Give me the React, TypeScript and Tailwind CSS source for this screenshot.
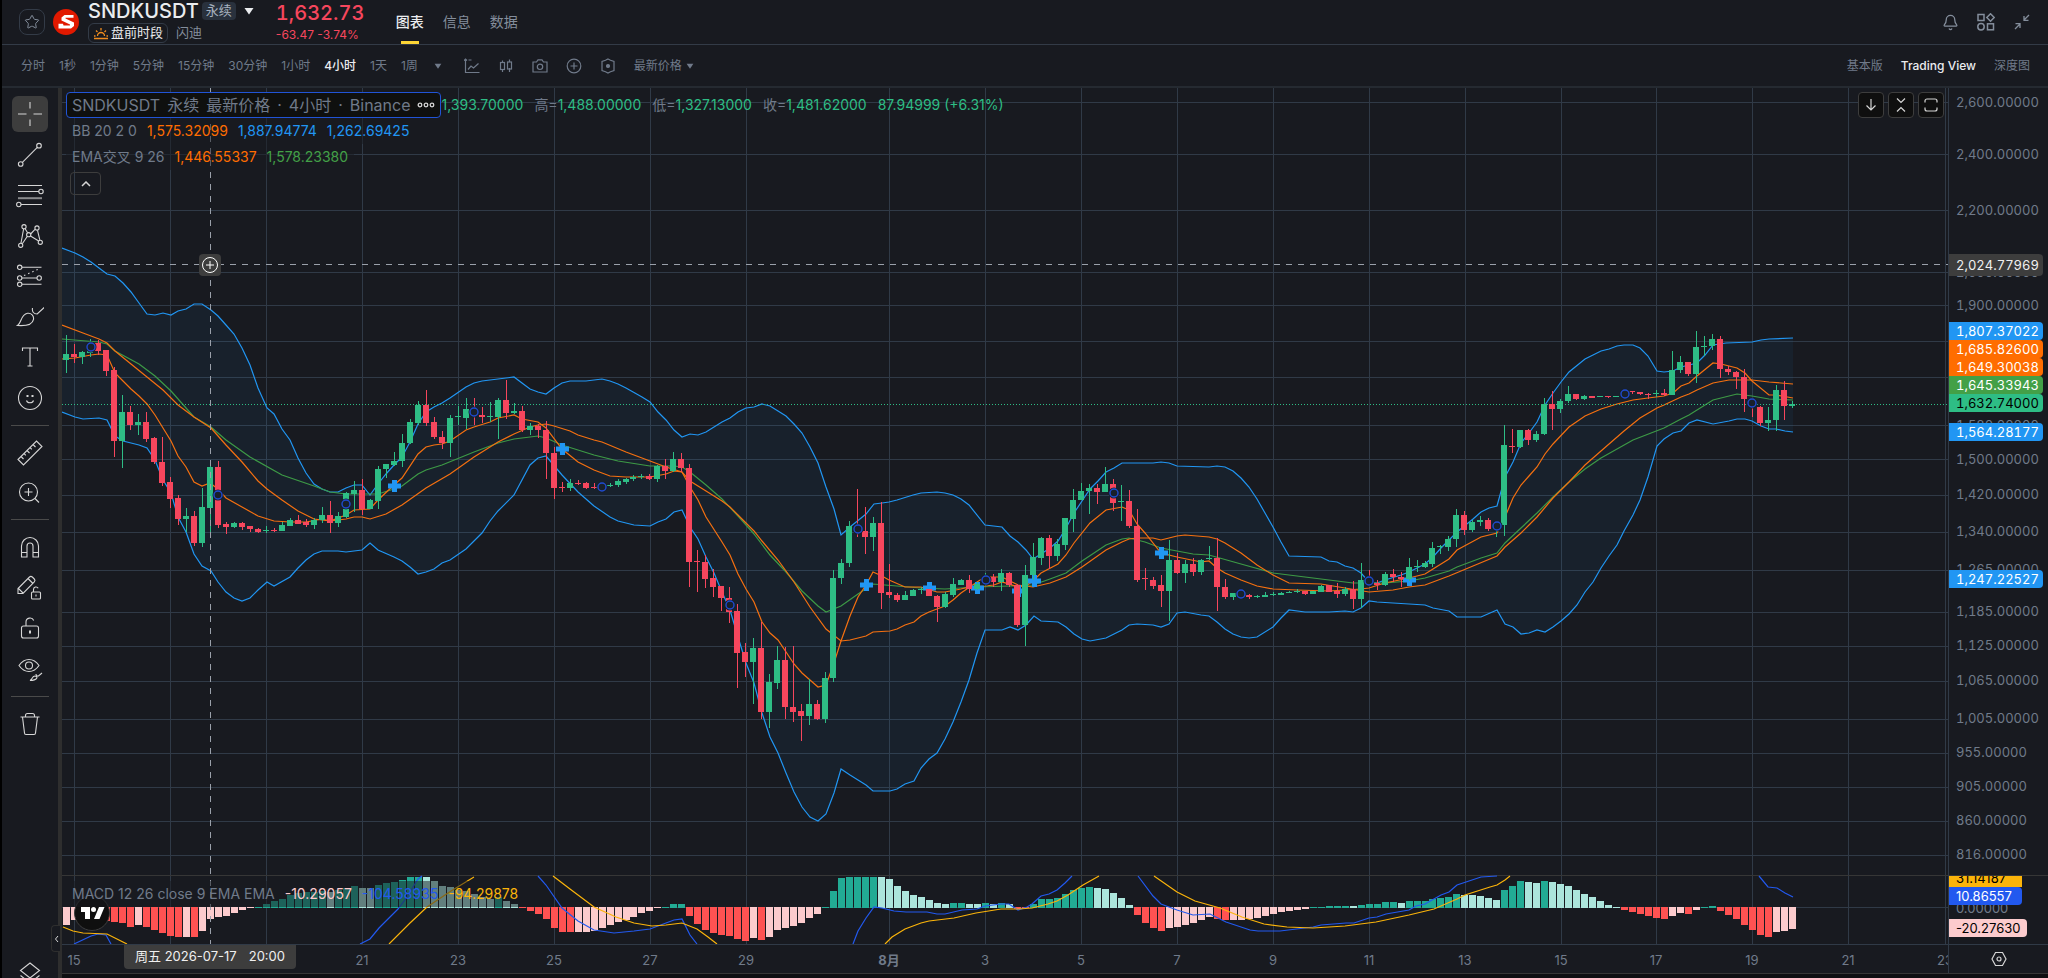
import { ReactNode } from "react";
import { Bell, Star } from "lucide-react";

// plot area in chart units: x 62-1948, price pane 88-876, macd pane 876-944
const LEFT = 62;
const TOP = 88;
const WIDTH = 1886;
const HEIGHT = 856;
const PRICE_H = 788;
const MACD_H = 68;
const ZERO = 907;

const barX = (i: number) => 66.7 + 7.99 * i;

// up/down, high, body top, body bottom, low
const candles = `g 335 354 360 373,r 344 354 357 363,g 351 352 357 364,g 339 345 353 357,r 340 343 351 355,r 350 350 371 376,
r 367 370 441 457,g 395 412 441 468,r 406 412 425 430,g 414 422 425 435,r 412 422 439 442,r 437 438 462 464,
r 437 462 483 486,r 477 482 499 508,r 495 498 519 525,g 508 516 519 532,r 511 516 543 546,g 488 507 543 547,
g 464 467 508 534,r 461 467 525 528,r 522 524 527 534,g 522 523 527 528,r 522 523 527 530,r 526 526 529 532,
r 528 529 532 533,g 526 530 531 533,r 528 530 531 532,g 522 525 531 531,g 518 520 526 526,r 515 520 524 524,
r 519 522 525 527,g 518 520 525 529,g 507 515 520 523,r 501 515 523 533,g 512 516 523 527,g 492 493 517 518,
g 481 490 494 512,r 479 490 509 515,g 499 500 509 509,g 466 469 501 509,g 464 464 469 478,g 452 461 465 466,
g 434 443 461 467,g 419 422 443 444,g 401 405 423 425,r 390 405 423 426,r 417 422 437 439,r 431 437 443 449,
g 415 418 443 457,g 406 416 417 425,g 398 409 418 429,r 398 409 414 425,r 407 415 417 423,g 402 416 417 422,
g 398 400 417 439,r 380 400 413 419,g 403 411 413 414,r 406 411 430 432,g 423 426 430 435,r 424 426 430 438,
r 421 430 453 479,r 447 453 488 499,r 482 487 488 492,g 479 483 488 491,r 480 483 484 485,r 482 483 488 489,
r 483 487 488 489,r 484 486 488 489,g 483 485 486 487,g 479 481 485 487,g 478 479 482 484,g 475 477 479 481,
g 474 476 477 479,r 474 476 479 480,g 465 466 479 482,r 459 466 471 479,g 452 459 471 472,r 453 459 468 472,
r 464 468 562 587,r 550 561 562 592,r 555 562 579 588,r 569 578 587 597,r 586 586 598 611,r 587 598 612 623,
r 604 611 653 688,r 643 652 662 677,g 638 648 662 704,r 622 648 712 719,g 674 682 712 728,g 646 660 683 689,
r 647 660 707 719,r 646 707 712 722,r 704 711 716 741,g 679 704 716 725,r 700 704 719 720,g 672 678 719 723,
g 570 578 678 682,g 559 563 578 584,g 521 526 563 567,r 489 526 531 537,r 507 531 537 554,g 517 523 537 551,
r 502 523 593 609,r 564 592 595 598,r 593 595 600 602,g 591 595 600 600,g 589 590 596 596,g 587 589 590 594,
r 589 589 596 596,r 595 596 607 622,g 592 594 607 608,g 578 584 595 597,g 579 580 585 585,r 575 580 589 593,
g 582 584 589 590,g 573 578 583 586,r 574 577 582 587,g 569 573 582 591,r 572 573 585 587,r 584 585 625 627,
g 565 575 625 646,g 543 557 575 580,g 537 538 558 565,r 535 538 556 569,g 539 544 556 561,g 518 518 545 550,
g 489 500 519 532,g 483 491 500 500,g 484 488 491 514,r 484 488 492 504,g 467 484 492 492,r 479 484 503 511,
g 485 501 502 521,r 490 501 526 528,r 509 526 580 582,r 568 578 579 590,r 577 580 586 589,r 575 585 591 607,
g 540 560 591 621,r 553 560 573 574,g 560 564 573 583,r 558 564 572 576,g 559 560 572 575,g 546 558 559 560,
r 538 558 587 611,r 579 587 597 599,g 593 593 597 600,r 592 593 595 597,r 594 595 597 599,g 595 596 597 598,
g 592 595 597 597,g 592 594 595 596,g 592 593 595 595,g 591 592 593 593,g 589 591 592 593,r 591 591 594 595,
g 591 591 594 594,g 585 586 592 592,r 585 585 592 592,r 583 591 594 598,g 587 589 594 596,r 581 589 599 609,
g 563 580 599 608,r 570 579 583 585,r 580 583 585 590,g 572 574 585 586,r 569 574 577 582,r 572 577 579 587,
g 558 567 579 581,g 560 566 567 572,g 561 563 567 568,g 542 548 564 567,g 545 546 547 554,g 536 539 547 551,
g 509 515 539 547,r 511 515 530 535,g 520 522 530 532,g 516 520 522 526,r 518 520 529 531,g 522 524 529 537,
g 425 445 525 536,r 429 446 447 453,g 430 430 447 448,r 429 430 440 445,g 431 434 440 442,g 398 404 434 435,
r 391 404 409 430,g 399 401 409 413,g 386 394 401 403,r 394 394 399 400,g 395 396 399 400,r 396 396 398 398,
g 396 396 397 397,r 396 396 397 398,g 396 396 397 397,g 391 393 396 397,r 391 391 392 394,r 392 392 394 395,
r 393 394 395 399,g 390 393 394 397,r 389 393 395 396,g 351 370 395 395,g 356 362 370 373,r 362 362 374 376,
g 331 347 374 383,g 336 346 347 356,g 334 339 346 350,r 336 339 369 378,r 366 369 372 375,r 371 372 377 389,
r 369 377 399 412,r 398 400 407 417,r 406 407 423 426,g 407 420 423 431,g 385 390 420 431,r 381 390 406 420,
g 401 404 406 408`
  .split(",")
  .map((row) => {
    const [dir, ...v] = row.trim().split(" ");
    const [high, top, bottom, low] = v.map(Number);
    return { up: dir === "g", high, top, bottom, low };
  });

const upper =
  "62,248 75,253 83,257 91,262 99,268 107,274 115,276 123,283 131,292 139,303 147,314 155,315 163,313 171,315 178,311 186,309 194,304 202,304 211,310 218,316 226,325 234,334 242,348 250,365 258,388 267,408 274,414 282,429 290,440 298,458 306,473 314,484 322,489 330,492 338,492 346,488 354,485 362,485 370,495 378,484 386,474 394,465 402,457 410,442 418,424 426,412 434,407 442,403 450,398 466,387 474,383 482,381 490,380 498,379 514,377 522,383 530,389 538,392 546,394 554,388 562,383 570,381 578,381 586,381 602,379 610,381 618,384 626,388 642,397 650,402 658,412 666,420 674,430 682,437 690,434 698,435 706,432 722,422 730,418 738,412 746,408 754,407 762,404 770,406 778,411 786,416 794,424 802,433 810,447 818,463 826,487 834,509 841,535 850,527 866,514 874,504 882,503 889,502 897,500 913,495 921,493 937,492 945,493 953,495 961,499 969,505 985,525 1002,527 1010,536 1018,542 1026,550 1033,559 1041,554 1050,548 1058,541 1066,528 1074,513 1082,501 1090,489 1098,481 1106,472 1114,468 1122,463 1153,463 1161,462 1169,463 1177,466 1209,467 1217,466 1225,467 1233,471 1241,478 1249,487 1257,499 1265,513 1273,527 1281,542 1289,556 1321,557 1329,561 1337,562 1345,566 1353,568 1361,573 1369,582 1377,583 1385,580 1401,575 1409,572 1425,564 1433,557 1441,548 1449,540 1457,532 1473,519 1481,512 1489,508 1497,506 1505,477 1513,462 1521,443 1529,433 1537,422 1545,405 1553,393 1561,382 1569,372 1585,359 1601,351 1609,349 1617,346 1624,345 1633,345 1640,348 1648,356 1657,371 1664,372 1673,371 1681,367 1697,363 1705,355 1713,345 1726,343 1752,342 1761,340 1769,339 1793,338";

const lower =
  "62,412 75,417 83,419 99,418 107,420 115,436 123,441 131,443 139,445 147,448 155,460 163,480 171,493 178,517 186,532 194,554 202,566 211,571 218,582 226,592 234,598 242,601 250,598 258,590 267,582 274,586 290,577 298,568 306,560 314,554 322,551 338,551 346,552 354,551 362,550 370,543 378,550 394,557 402,561 410,567 418,574 426,572 434,569 442,563 450,560 466,549 482,533 490,521 498,511 514,495 530,465 538,458 546,456 562,475 578,492 594,506 610,517 618,521 626,523 634,525 650,526 658,522 666,519 674,512 682,510 690,527 698,539 706,557 714,573 722,592 730,610 738,637 746,663 754,683 762,713 770,737 778,753 786,773 794,792 802,807 810,817 818,821 826,814 834,793 841,769 850,775 866,785 873,791 890,791 897,789 905,784 914,781 921,768 929,759 937,753 945,739 953,722 961,702 969,680 977,653 985,630 1002,630 1010,627 1018,630 1026,625 1034,616 1041,621 1058,622 1066,627 1074,634 1082,639 1090,641 1106,638 1122,630 1129,625 1137,624 1153,625 1161,627 1169,624 1177,613 1185,612 1201,615 1209,616 1217,622 1225,629 1233,634 1241,637 1249,638 1257,637 1273,627 1281,618 1289,610 1305,612 1329,612 1345,611 1353,612 1361,608 1369,601 1377,602 1393,603 1425,605 1433,608 1449,611 1457,617 1481,617 1497,610 1505,624 1513,627 1521,634 1529,633 1537,630 1545,632 1553,627 1561,621 1569,614 1577,605 1585,592 1593,582 1601,568 1609,556 1617,545 1624,531 1633,515 1640,500 1648,477 1657,446 1664,439 1673,433 1681,431 1689,423 1697,420 1713,424 1729,421 1737,419 1745,419 1752,421 1761,426 1769,429 1776,429 1785,431 1793,432";

const basis =
  "62,325 83,333 99,339 107,343 115,351 131,364 147,377 163,390 178,405 194,417 211,428 226,445 242,462 258,481 267,489 282,500 298,511 314,519 330,521 346,519 354,517 362,517 370,519 386,514 402,505 426,488 450,474 474,457 498,442 514,434 530,427 538,425 546,424 554,426 570,431 578,435 594,440 602,442 626,452 650,461 666,467 682,472 690,481 706,491 722,501 730,507 738,515 754,531 762,541 778,560 794,582 810,607 826,629 841,641 850,640 866,636 873,632 890,631 897,629 905,625 914,622 921,616 929,612 945,606 953,600 961,593 977,582 985,577 1002,577 1010,581 1018,585 1033,587 1050,583 1066,577 1082,567 1106,550 1122,542 1129,539 1137,538 1153,538 1161,540 1169,538 1177,536 1185,535 1209,537 1217,539 1225,543 1241,553 1257,565 1273,575 1289,583 1321,584 1345,588 1369,592 1393,590 1409,587 1425,585 1449,576 1473,566 1497,556 1505,547 1521,533 1529,525 1537,517 1553,498 1569,482 1585,465 1601,451 1624,431 1640,418 1657,408 1664,405 1681,397 1689,394 1697,390 1713,383 1729,380 1737,380 1752,380 1769,382 1793,384";

const fastEma =
  "62,359 75,358 91,355 99,354 107,355 115,373 123,381 131,389 139,396 147,404 155,415 163,428 171,441 178,456 186,467 194,482 202,486 210,483 218,489 226,498 242,507 258,516 274,521 290,522 306,522 322,519 330,521 346,515 354,510 370,509 378,500 394,485 402,478 418,454 426,447 434,445 442,444 450,441 466,430 474,427 490,422 498,418 514,415 522,419 538,422 546,428 562,449 578,462 594,470 610,476 626,477 650,477 666,474 674,471 682,472 690,487 698,500 706,517 722,542 730,555 738,574 746,589 754,602 762,622 770,633 778,640 794,664 802,673 810,680 818,687 826,685 834,663 841,641 850,616 858,597 866,585 873,572 882,576 889,580 905,587 921,587 937,592 945,592 961,589 969,587 985,586 994,585 1002,582 1018,587 1026,586 1033,581 1041,573 1058,564 1066,555 1074,543 1090,523 1106,510 1122,507 1129,510 1137,524 1145,533 1161,553 1177,557 1201,562 1209,561 1217,568 1225,573 1241,580 1257,586 1273,589 1297,590 1329,591 1361,589 1369,588 1385,583 1409,578 1425,574 1433,569 1449,559 1457,550 1481,537 1497,533 1505,517 1513,498 1521,485 1529,476 1537,467 1545,454 1553,444 1569,427 1585,416 1601,409 1617,404 1633,400 1648,398 1664,396 1673,393 1681,386 1689,383 1697,376 1713,363 1721,364 1737,368 1745,373 1752,381 1769,395 1776,395 1793,398";

const slowEma =
  "62,339 99,342 107,344 115,351 139,364 155,376 171,391 194,417 211,427 226,440 250,457 282,475 314,486 330,492 346,494 362,494 378,494 394,489 402,486 418,474 426,470 442,465 474,452 498,443 514,439 538,436 546,438 562,445 594,455 618,461 650,466 674,466 682,467 690,472 706,485 722,499 738,516 754,534 770,555 786,572 802,591 818,606 826,612 841,606 858,594 873,584 897,586 921,588 945,589 977,587 1010,586 1033,585 1050,579 1066,573 1082,561 1106,545 1122,539 1129,538 1145,542 1161,548 1193,554 1209,555 1241,564 1273,573 1305,577 1353,583 1385,583 1409,581 1425,578 1449,571 1457,567 1481,558 1497,553 1505,543 1521,528 1537,513 1553,497 1569,482 1585,469 1601,458 1633,440 1664,428 1681,419 1689,415 1713,400 1737,394 1752,396 1769,399 1793,400";

const macdLines = [
  "74,944 91,936 98,934 106,935 111,944",
  "360,944 370,939 379,928 398,909 407,897 418,879 422,876",
  "538,876 546,885 562,908 578,921 594,930 614,933 634,931 650,929 666,923 674,920 682,919 690,935 697,944",
  "853,944 858,931 866,918 874,907 882,908 894,911 906,912 927,912 937,914 945,914 962,910 977,909 985,906 1001,904 1009,904 1018,910 1027,907 1032,904 1041,896 1049,894 1057,890 1065,883 1072,876",
  "1138,876 1153,896 1161,904 1177,910 1193,915 1210,914 1226,922 1250,930 1258,931 1280,931 1313,927 1321,925 1346,923 1354,923 1369,918 1377,917 1386,914 1409,910 1416,906 1425,904 1441,895 1449,892 1457,885 1481,877 1497,876",
  "1759,876 1768,887 1777,888 1785,893 1793,897",
];

const signalLines = [
  "63,927 73,931 83,933 107,934 127,944",
  "389,944 410,923 427,907 451,891 474,877",
  "553,876 570,889 594,907 616,917 634,923 652,926 666,925 682,923 697,929 708,937 717,944",
  "885,944 892,937 905,929 921,923 929,921 954,918 976,913 1001,909 1019,909 1032,908 1048,904 1057,901 1068,895 1083,885 1099,876",
  "1154,876 1177,892 1195,901 1220,908 1242,917 1264,924 1287,927 1313,928 1345,926 1376,922 1409,915 1434,909 1457,899 1465,895 1490,887 1497,885 1505,880 1510,876",
];

// T/L above zero (rising, fading), R/P below zero
const histogram =
  `P18 P13 P10 R12 R14 R14 R15 R16 R20 P18 R20 R23 R26 R29 R30 P30 R30 P24 P12 P10 P9 P6 P3 P1
T1 T4 T7 T9 T13 T15 T16 T16 T17 L16 T18 T20 T22 L20 L20 T23 T25 T26 T28 T31 T31 L31 L27 L22
L21 L18 L17 L14 L11 L9 T11 L7 L4 R1 R4 R7 R12 R21 R25 R25 P25 P25 P24 P21 P18 P15 P13 P10
P6 P4 P1 T1 T4 T4 R9 R17 R23 R26 R28 R29 R32 R34 P31 R33 P30 P23 P21 P19 P16 P11 P7 T1
T17 T30 T31 T31 T31 T31 L31 L29 L22 L17 L13 L11 L8 L5 L4 T5 T5 L4 L4 T5 L4 T5 L4 R2
R1 T4 T9 T9 T10 T14 T18 T20 T21 L20 L19 L15 L10 L3 R8 R16 R21 R24 P21 P20 P18 P16 P13 P10
R12 R13 P13 P13 P12 P11 P9 P7 P5 P4 P3 P2 T1 T1 T2 T2 T2 L2 T3 T4 T4 T6 T6 L5
T7 T7 T7 T9 T10 T11 T14 L13 L13 L12 L10 L8 T18 T22 T27 L26 L25 T27 L26 L24 L22 L18 L14 L11
L7 L3 L1 R3 R5 R7 R9 R11 R12 P9 P6 R7 P3 T1 T2 R4 R8 R12 R18 R23 R28 R30 P25 P24 P22`.split(
    /\s+/
  );

const histColors: Record<string, string> = {
  T: "#22ab94",
  L: "#ace5dc",
  R: "#ff5252",
  P: "#fccbcd",
};

const crosses = [
  [394, 486], [562, 449], [866, 585], [929, 588], [977, 588],
  [1018, 591], [1034, 581], [1161, 553], [1409, 580],
];

const rings = [
  [91, 347], [218, 495], [346, 504], [474, 412], [602, 487], [730, 605], [858, 529],
  [986, 580], [1114, 493], [1241, 594], [1369, 581], [1497, 526], [1625, 394], [1752, 403],
];

// ticks under a price tag keep their grid line but carry no label
const priceTicks = [
  ["2,600.00000", 102], ["2,400.00000", 154], ["2,200.00000", 210], ["2,000.00000", 272],
  ["1,900.00000", 305], ["", 341], ["", 377], ["1,580.00000", 425],
  ["1,500.00000", 459], ["1,420.00000", 495], ["1,340.00000", 532], ["1,265.00000", 570],
  ["1,185.00000", 612], ["1,125.00000", 646], ["1,065.00000", 681], ["1,005.00000", 719],
  ["955.00000", 753], ["905.00000", 787], ["860.00000", 821], ["816.00000", 855],
] as const;

const priceTags = [
  ["1,807.37022", 331, "bg-[#2196f3] text-white"],
  ["1,685.82600", 349, "bg-[#ff6d00] text-white"],
  ["1,649.30038", 367, "bg-[#ff6d00] text-white"],
  ["1,645.33943", 385, "bg-[#43a047] text-white"],
  ["1,632.74000", 403, "bg-[#2ebd85] text-black"],
  ["1,564.28177", 432, "bg-[#2196f3] text-white"],
  ["1,247.22527", 580, "bg-[#2196f3] text-white"],
] as const;

const dayTicks = [
  ["15", 74], ["", 170], ["", 266], ["21", 362], ["23", 458], ["25", 554], ["27", 650],
  ["29", 746], ["8月", 889], ["3", 985], ["5", 1081], ["7", 1177], ["9", 1273], ["11", 1369],
  ["13", 1465], ["15", 1561], ["17", 1656], ["19", 1752], ["21", 1848], ["23", 1945],
] as const;

const pctX = (x: number) => `${((x - LEFT) / WIDTH) * 100}%`;
const pctY = (y: number) => `${((y - TOP) / PRICE_H) * 100}%`;
const pctMacd = (y: number) => `${((y - 876) / MACD_H) * 100}%`;

const Caret = ({ className }: { className: string }) => (
  <svg viewBox="0 0 10 8" className={className} fill="currentColor">
    <path d="M.5 1h9L5 7.500z" />
  </svg>
);

const ToolIcon = ({ children }: { children: ReactNode }) => (
  <svg viewBox="0 0 28 28" className="size-7" fill="none" stroke="currentColor" strokeWidth="1.1">
    {children}
  </svg>
);

const Tool = ({ label, active, children }: { label: string; active?: boolean; children: ReactNode }) => (
  <button
    aria-label={label}
    className={
      active
        ? "size-9 self-center flex items-center justify-center rounded-md bg-[#3d3d3d]"
        : "size-9 self-center flex items-center justify-center rounded-md"
    }
  >
    <ToolIcon>{children}</ToolIcon>
  </button>
);

const Divider = () => <hr className="w-[38px] my-[7px] border-[#4a4a4a]" />;

const Header = () => (
  <header className="h-[45px] shrink-0 flex items-center border-b border-[#333b47] pl-[17px] pr-[17px]">
    <button aria-label="收藏" className="size-[26px] flex items-center justify-center rounded-lg border border-[#333b47] text-[#848e9c]">
      <Star className="size-4" strokeWidth={1.5} />
    </button>
    <svg viewBox="0 0 26 26" className="size-[26px] ml-2">
      <circle cx="13" cy="13" r="13" fill="#e11900" />
      <path
        d="M20.500 6H11.500L8.500 8.500V11.500L17 15.500V16.500H10.500L10 14.700H5.500V17L5.500 19.500H18L21 17V13.500L12.500 9.500V8.700H20.500z"
        fill="#fff"
      />
    </svg>
    <div className="ml-[9px] flex flex-col gap-[2px]">
      <div className="h-5 flex items-center">
        <h1 className="text-xl leading-5 font-medium text-[#eaecef]">SNDKUSDT</h1>
        <span className="ml-[3px] h-[18px] px-1 flex items-center rounded-sm bg-[#29313d] text-[13px] text-[#a7b1bf]">永续</span>
        <button aria-label="选择合约" className="ml-2 text-[#eaecef]">
          <Caret className="w-[10px] h-2" />
        </button>
      </div>
      <div className="h-5 flex items-center gap-2 text-[13px]">
        <span className="h-5 px-1 flex items-center gap-[2px] rounded-md border border-[#333b47] text-[#eaecef]">
          <svg viewBox="0 0 16 16" className="size-4" fill="none" stroke="#f08c1e" strokeWidth="1.300">
            <path d="M1 13.500h14M4.500 11a3.500 3.500 0 0 1 7 0M1 11h1.500M13.500 11H15M8 3v2.500M3 5.500l1.500 1.500M13 5.500L11.500 7" />
          </svg>
          盘前时段
        </span>
        <span className="text-[#848e9c]">闪迪</span>
      </div>
    </div>
    <div className="ml-[22px] w-[92px] flex flex-col gap-[2px] text-[#f6465d]">
      <span className="text-xl leading-6 font-medium tabular-nums">1,632.73</span>
      <span className="text-xs leading-4 whitespace-nowrap">-63.47 -3.74%</span>
    </div>
    <nav className="ml-7 h-full flex gap-[19px] text-sm text-[#848e9c]">
      <a href="#chart" className="relative flex items-center font-medium text-[#eaecef]">
        图表
        <span className="absolute bottom-0 left-[5px] w-[18px] h-[3px] bg-[#fcd535]" />
      </a>
      <a href="#info" className="flex items-center">信息</a>
      <a href="#data" className="flex items-center">数据</a>
    </nav>
    <div className="ml-auto flex items-center gap-[18px] text-[#848e9c]">
      <button aria-label="提醒">
        <Bell className="size-[17px]" strokeWidth={1.8} />
      </button>
      <button aria-label="布局">
        <svg viewBox="0 0 18 18" className="size-[18px]" fill="none" stroke="currentColor" strokeWidth="1.500">
          <rect x="1" y="1.500" width="6" height="6" />
          <path d="M13.500.8l3.700 3.700-3.700 3.700-3.700-3.700z" />
          <circle cx="4" cy="13.800" r="3.200" />
          <rect x="10.500" y="10.800" width="6" height="6" />
        </svg>
      </button>
      <button aria-label="退出全屏">
        <svg viewBox="0 0 18 18" className="size-[18px]" fill="none" stroke="currentColor" strokeWidth="1.300">
          <path d="M16 2l-5 5M11 3v4.300h4.500M2 16l5-5M2.500 10.700H7V15" />
        </svg>
      </button>
    </div>
  </header>
);

const intervals = ["分时", "1秒", "1分钟", "5分钟", "15分钟", "30分钟", "1小时", "4小时", "1天", "1周"];

const IntervalBar = () => (
  <div className="h-[43px] shrink-0 flex items-center border-b-2 border-[#252a31] pl-[19px] pr-[18px] text-xs text-[#707a8a]">
    <div className="flex items-center gap-[14px]">
      {intervals.map((name) => (
        <button key={name} className={name === "4小时" ? "font-medium text-[#eaecef]" : ""}>
          {name}
        </button>
      ))}
    </div>
    <button aria-label="更多周期" className="ml-4">
      <Caret className="w-2 h-[6px]" />
    </button>
    <div className="ml-[22px] flex items-center gap-[18px]">
      <button aria-label="指标">
        <svg viewBox="0 0 16 16" className="size-4" fill="none" stroke="currentColor" strokeWidth="1.200">
          <path d="M1.500 1v13.500H15.500M4 11.500l3-3.500 2.500 2 5-4.500M0 2.500l1.500-1.500L3 2.500M4.500 2h3" />
        </svg>
      </button>
      <button aria-label="图表类型">
        <svg viewBox="0 0 16 16" className="size-4" fill="none" stroke="currentColor" strokeWidth="1.200">
          <path d="M4.500 2.500v2M4.500 11.500v2.500M11.500 1.500v2.500M11.500 10v4" />
          <rect x="2.500" y="4.500" width="4" height="7" />
          <rect x="9.500" y="4" width="4" height="7" />
        </svg>
      </button>
      <button aria-label="截图">
        <svg viewBox="0 0 16 16" className="size-4" fill="none" stroke="currentColor" strokeWidth="1.200">
          <path d="M1 4h3.500L6 1.800h4L11.500 4H15v10H1z" />
          <circle cx="8" cy="8.800" r="2.700" />
        </svg>
      </button>
      <button aria-label="添加">
        <svg viewBox="0 0 16 16" className="size-4" fill="none" stroke="currentColor" strokeWidth="1.200">
          <circle cx="8" cy="8" r="6.800" />
          <path d="M8 4.500v7M4.500 8h7" />
        </svg>
      </button>
      <button aria-label="设置">
        <svg viewBox="0 0 16 16" className="size-4" fill="none" stroke="currentColor" strokeWidth="1.200">
          <path d="M8 1l2.500 1.300 3.500 1.200v9l-3.500 1.200L8 15l-2.500-1.300L2 12.500v-9l3.500-1.200z" />
          <circle cx="8" cy="8" r="1.500" fill="currentColor" />
        </svg>
      </button>
    </div>
    <button className="ml-[18px] flex items-center gap-1">
      最新价格
      <Caret className="w-2 h-[6px]" />
    </button>
    <nav className="ml-auto flex items-center gap-[18px]">
      <a href="#basic">基本版</a>
      <a href="#tv" className="font-medium text-[#eaecef]">Trading View</a>
      <a href="#depth">深度图</a>
    </nav>
  </div>
);

const DrawingTools = () => (
  <aside className="w-[56px] shrink-0 pt-[6px] flex flex-col items-center overflow-hidden text-[#d6d6d6]">
    <div className="h-[324px] shrink-0 grid grid-rows-8">
      <Tool label="十字线" active>
        <path d="M14 2v6.500M14 19.500V26M2 14h8.500M17.500 14H26" />
      </Tool>
      <Tool label="趋势线">
        <circle cx="4.700" cy="23" r="2.300" />
        <circle cx="23" cy="4.700" r="2.300" />
        <path d="M6.400 21.300L21.300 6.400" />
      </Tool>
      <Tool label="斐波那契">
        <path d="M2 4.500h24M2 10.500h21M5 23.500h21" />
        <path d="M2 17.200h24" strokeWidth="2" opacity=".6" />
        <circle cx="25" cy="10.500" r="2.200" />
        <circle cx="2.800" cy="23.500" r="2.200" />
      </Tool>
      <Tool label="形态">
        <path d="M5 21L7.600 7M9 6.500l2.600 4.300M14.600 12L19 7.300M21.500 8.300l2.300 9.500M6.300 21.800L11.200 14.500M14.500 14l8.200 5" />
        <circle cx="4.700" cy="23.300" r="2.100" />
        <circle cx="8" cy="4.700" r="2.100" />
        <circle cx="12.700" cy="12.700" r="2.100" />
        <circle cx="21" cy="6" r="2.100" />
        <circle cx="24.300" cy="20.300" r="2.100" />
      </Tool>
      <Tool label="预测">
        <path d="M6 5.300h19.500M6 16h15M6 22.300h19.500" />
        <path d="M8 13.500L24 6.500" strokeDasharray="1.500 3" />
        <circle cx="3.700" cy="5.300" r="2.200" />
        <circle cx="3.700" cy="16" r="2.200" />
        <circle cx="3.700" cy="22.300" r="2.200" />
        <circle cx="23.200" cy="16" r="2.200" />
      </Tool>
      <Tool label="画笔">
        <path d="M1.500 22.500c4-2 3-11 10-12.200 4-.5 6.500 2.500 6 6-1 5.500-7.500 6.800-16 6.200z" />
        <path d="M16.500 5c-.7 4 1.300 6 4.700 6l7-6.500" />
      </Tool>
      <Tool label="文字">
        <path d="M6.500 8V5h15v3M14 5v18M11.500 23h5" />
      </Tool>
      <Tool label="表情">
        <circle cx="14" cy="14" r="11.500" />
        <path d="M10.500 16.500c1 3 6 3 7 0" />
        <path d="M10.500 12h2M15.500 12h2" strokeWidth="2" />
      </Tool>
    </div>
    <Divider />
    <div className="h-[79px] shrink-0 grid grid-rows-2">
      <Tool label="测量">
        <path d="M2 20.500L20.500 2l5.500 5.500L7.500 26zM5 17.500l2.500 2.500M8 14.500l1.800 1.800M11 11.500l2.500 2.500M14 8.500l1.800 1.800M17 5.500l2.500 2.500" />
      </Tool>
      <Tool label="放大">
        <circle cx="12.500" cy="14" r="9" />
        <path d="M12.500 10v8M8.500 14h8M19 20.500l4 4" />
      </Tool>
    </div>
    <Divider />
    <div className="h-[162px] shrink-0 grid grid-rows-4">
      <Tool label="磁铁">
        <path d="M5.500 24V13a8.500 8.500 0 0 1 17 0v11h-5.500V13a3 3 0 0 0-6 0v11zM5.500 19.500H11M17 19.500h5.500" />
      </Tool>
      <Tool label="保持绘图">
        <path d="M2 19.500v-5L13.500 3a2 2 0 0 1 2.800 0l2 2a2 2 0 0 1 0 2.800L7 19.500zM12 4.500l5 5M2.500 14.500l4.500 4.500" />
        <rect x="15.500" y="18" width="9" height="7" rx="1" />
        <path d="M17.500 18v-2.500a2.500 2.500 0 0 1 4.700-1.200M20 20.500v2" />
      </Tool>
      <Tool label="锁定">
        <rect x="5.500" y="12" width="17" height="12" rx="2" />
        <path d="M10 12V8a4 4 0 0 1 7.700-1.500" />
        <path d="M14 16.500v3" strokeWidth="2" />
      </Tool>
      <Tool label="隐藏">
        <path d="M3 10.500C8.500 2.500 17.500 2.500 23 10.500c-5.500 8-14.500 8-20 0z" />
        <circle cx="13" cy="10.500" r="3.500" />
        <path d="M14 25.500c2.500-1 2-4.500 5-4.500 3.500.5 2.500 4.500-5 4.500zM20 19c0 1.500 1 2.200 2.500 2l3.500-3" />
      </Tool>
    </div>
    <Divider />
    <div className="h-10 shrink-0 grid">
      <Tool label="删除">
        <path d="M4.500 7h19M9.500 7V5.500a2 2 0 0 1 2-2h5a2 2 0 0 1 2 2V7M6.500 7l2 16a1.500 1.500 0 0 0 1.500 1.500h8a1.500 1.500 0 0 0 1.500-1.500l2-16" />
      </Tool>
    </div>
    <button aria-label="对象树" className="mt-auto h-4 shrink-0 overflow-hidden">
      <svg viewBox="0 0 28 28" className="size-7" fill="none" stroke="currentColor" strokeWidth="1.100">
        <path d="M14 1l9.500 7.500L14 16 4.500 8.500zM4.500 13.500L14 21l9.500-7.500" />
      </svg>
    </button>
  </aside>
);

const Plot = () => (
  <svg
    viewBox={`${LEFT} ${TOP} ${WIDTH} ${HEIGHT}`}
    preserveAspectRatio="none"
    className="absolute inset-0 size-full"
    fill="none"
  >
    <g fill="#303a47" shapeRendering="crispEdges">
      {priceTicks.map(([, y]) => (
        <rect key={y} x={LEFT} y={y} width={WIDTH} height="1" />
      ))}
      <rect x={LEFT} y={ZERO} width={WIDTH} height="1" />
      {dayTicks.map(([, x]) => (
        <rect key={x} x={x} y={TOP} width="1" height={HEIGHT} />
      ))}
    </g>
    <rect x={LEFT} y="875" width={WIDTH} height="1" fill="#363636" />

    <polygon
      points={`${upper} ${lower.split(" ").reverse().join(" ")}`}
      fill="#2196f3"
      fillOpacity="0.06"
    />
    <g strokeWidth="1.200">
      <polyline points={upper} stroke="#2196f3" />
      <polyline points={lower} stroke="#2196f3" />
      <polyline points={slowEma} stroke="#3d9a46" />
      <polyline points={basis} stroke="#f57010" />
      <polyline points={fastEma} stroke="#f57010" />
    </g>

    <path d={`M${LEFT} 404.500H1948`} stroke="#2ebd85" strokeDasharray="1 2" />

    {crosses.map(([x, y]) => (
      <path key={x} d={`M${x - 6} ${y}h13M${x + 0.5} ${y - 6}v12`} stroke="#2196f3" strokeWidth="5" />
    ))}

    <g shapeRendering="crispEdges">
      {candles.map((c, i) => {
        const x = Math.floor(barX(i));
        const color = c.up ? "#2ebd85" : "#f6465d";
        return (
          <g key={i} fill={color}>
            <rect x={x} y={c.high} width="1" height={c.low - c.high} />
            <rect x={x - 3} y={c.top} width="6" height={Math.max(1, c.bottom - c.top)} />
          </g>
        );
      })}
    </g>

    {rings.map(([x, y]) => (
      <g key={x}>
        <circle cx={x} cy={y} r="5.500" fill="#18202a" />
        <circle cx={x} cy={y} r="4" stroke="#1f4bd0" strokeWidth="1.400" />
      </g>
    ))}

    <g shapeRendering="crispEdges">
      {histogram.map((bar, i) => {
        const size = Number(bar.slice(1));
        const above = bar[0] === "T" || bar[0] === "L";
        return (
          <rect
            key={i}
            x={Math.floor(barX(i)) - 3}
            y={above ? 908 - size : ZERO}
            width="7"
            height={size}
            fill={histColors[bar[0]]}
          />
        );
      })}
    </g>
    <g strokeWidth="1.200">
      {macdLines.map((points) => (
        <polyline key={points} points={points} stroke="#2259ef" />
      ))}
      {signalLines.map((points) => (
        <polyline key={points} points={points} stroke="#fbb40a" />
      ))}
    </g>

    <path
      d={`M210.500 ${TOP}V944M${LEFT} 264.500H1948`}
      stroke="#9aa0aa"
      strokeDasharray="6 6"
    />
  </svg>
);

const Legend = () => (
  <div className="absolute left-1 top-1 flex flex-col items-start text-sm text-[#707a8a]">
    <div className="h-[26px] flex items-center gap-[11px] whitespace-nowrap">
      <button className="h-[26px] px-[5px] flex items-center gap-[7px] rounded border border-[#2154d6] bg-[#0f100f] text-base">
        <span>SNDKUSDT</span>
        <span>永续</span>
        <span>最新价格</span>
        <span>·</span>
        <span>4小时</span>
        <span>·</span>
        <span>Binance</span>
        <svg viewBox="0 0 18 6" className="w-[18px] h-[6px]" fill="none" stroke="#d6d6d6" strokeWidth="1.300">
          <circle cx="3" cy="3" r="1.800" />
          <circle cx="9" cy="3" r="1.800" />
          <circle cx="15" cy="3" r="1.800" />
        </svg>
      </button>
      <span className="-ml-[11px] text-[#2ebd85]">1,393.70000</span>
      <span>高=<span className="text-[#2ebd85]">1,488.00000</span></span>
      <span>低=<span className="text-[#2ebd85]">1,327.13000</span></span>
      <span>收=<span className="text-[#2ebd85]">1,481.62000</span></span>
      <span className="text-[#2ebd85]">87.94999 (+6.31%)</span>
    </div>
    <div className="h-[26px] px-[6px] flex items-center gap-[10px] bg-[#181a20]/50">
      <span>BB 20 2 0</span>
      <span className="text-[#ff6d00]">1,575.32099</span>
      <span className="text-[#2196f3]">1,887.94774</span>
      <span className="text-[#2196f3]">1,262.69425</span>
    </div>
    <div className="h-[26px] px-[6px] flex items-center gap-[10px] bg-[#181a20]/50">
      <span>EMA交叉 9 26</span>
      <span className="text-[#ff6d00]">1,446.55337</span>
      <span className="text-[#43a047]">1,578.23380</span>
    </div>
    <button
      aria-label="收起图例"
      className="ml-1 mt-[2px] w-[31px] h-[23px] flex items-center justify-center rounded border border-[#3d3d3d] text-[#d6d6d6]"
    >
      <svg viewBox="0 0 10 6" className="w-[10px] h-[6px]" fill="none" stroke="currentColor" strokeWidth="1.500">
        <path d="M1 5l4-4 4 4" />
      </svg>
    </button>
  </div>
);

const PaneButtons = () => (
  <div className="absolute right-1 top-1 flex gap-1 text-[#d6d6d6]">
    {[
      ["下移", "M9 3v11M4.500 9.500L9 14l4.500-4.500"],
      ["折叠", "M5 2.500l4 4 4-4M5 15.500l4-4 4 4"],
      ["最大化", "M3 6.500V5a2 2 0 0 1 2-2h8a2 2 0 0 1 2 2v1.500M3 11.500V13a2 2 0 0 0 2 2h8a2 2 0 0 0 2-2v-1.500"],
    ].map(([label, d]) => (
      <button
        key={label}
        aria-label={label}
        className="size-[26px] flex items-center justify-center rounded border border-[#3d3d3d] bg-[#0f0f0f]"
      >
        <svg viewBox="0 0 18 18" className="size-[18px]" fill="none" stroke="currentColor" strokeWidth="1.200">
          <path d={d} />
        </svg>
      </button>
    ))}
  </div>
);

const PriceAxis = () => (
  <div className="w-[100px] shrink-0 grid grid-rows-[788fr_68fr] border-l border-[#303a47] text-[13px] text-[#707a8a]">
    <div className="relative overflow-hidden border-b border-[#363636] tabular-nums">
      {priceTicks
        .filter(([label]) => label)
        .map(([label, y]) => (
          <span key={label} className="absolute left-[7px] -translate-y-1/2 leading-4" style={{ top: pctY(y) }}>
            {label}
          </span>
        ))}
      {priceTags.map(([label, y, tone]) => (
        <span
          key={label}
          className={`absolute left-0 w-[94px] h-[18px] pl-[7px] -translate-y-1/2 leading-[18px] rounded-r-sm ${tone}`}
          style={{ top: pctY(y) }}
        >
          {label}
        </span>
      ))}
      <span
        className="absolute left-0 w-[94px] h-[22px] pl-[7px] -translate-y-1/2 leading-[22px] rounded-r-sm bg-[#3d3d3d] text-[#f0f0f0]"
        style={{ top: pctY(265) }}
      >
        2,024.77969
      </span>
    </div>
    <div className="relative overflow-hidden">
      <span className="absolute left-[7px] -translate-y-1/2 leading-4" style={{ top: pctMacd(908) }}>0.00000</span>
      <span
        className="absolute left-0 w-[73px] h-[18px] pl-[7px] -translate-y-1/2 leading-[18px] bg-[#fbb40a] text-black"
        style={{ top: pctMacd(878) }}
      >
        31.14187
      </span>
      <span
        className="absolute left-0 w-[73px] h-[18px] pl-[7px] -translate-y-1/2 leading-[18px] rounded-r-sm bg-[#2259ef] text-white"
        style={{ top: pctMacd(896) }}
      >
        10.86557
      </span>
      <span
        className="absolute left-0 h-[18px] px-[7px] -translate-y-1/2 leading-[18px] rounded-r-sm bg-[#fccbcd] text-black"
        style={{ top: pctMacd(928) }}
      >
        -20.27630
      </span>
    </div>
  </div>
);

const TimeAxis = () => (
  <div className="h-[30px] shrink-0 flex border-y border-t-[#303a47] border-b-[#363636] text-[13px] text-[#707a8a]">
    <div className="relative flex-1 overflow-hidden">
      {dayTicks
        .filter(([label]) => label)
        .map(([label, x]) => (
          <span
            key={x}
            className={`absolute top-[7px] -translate-x-1/2 leading-4 ${label === "8月" ? "font-bold" : ""}`}
            style={{ left: pctX(x) }}
          >
            {label}
          </span>
        ))}
      <span
        className="absolute top-0 w-[172px] h-6 -translate-x-1/2 flex items-center justify-center gap-3 whitespace-nowrap rounded-b-sm bg-[#3d3d3d] text-[#f0f0f0]"
        style={{ left: pctX(210) }}
      >
        <span>周五 2026-07-17</span>
        <span>20:00</span>
      </span>
    </div>
    <div className="w-[100px] shrink-0 flex items-center justify-center border-l border-[#303a47]">
      <button aria-label="图表设置" className="text-[#d6d6d6]">
        <svg viewBox="0 0 16 16" className="size-4" fill="none" stroke="currentColor" strokeWidth="1.200">
          <path d="M4.500 1.500h7L15 8l-3.500 6.500h-7L1 8z" />
          <circle cx="8" cy="8" r="2" />
        </svg>
      </button>
    </div>
  </div>
);

const App = () => {
  return (
    <div className="h-screen min-h-[800px] flex flex-col overflow-hidden border-l-2 border-black bg-[#181a20] font-['Inter','Noto_Sans_CJK_SC',sans-serif]">
      <Header />
      <IntervalBar />
      <main className="flex-1 min-h-0 flex">
        <DrawingTools />
        <div className="relative w-1 shrink-0 bg-[#2e2e2e]">
          <button
            aria-label="隐藏工具栏"
            className="absolute right-[2px] bottom-[26px] w-[9px] h-[27px] flex items-center justify-center rounded-l border border-r-0 border-[#2e2e2e] bg-[#181a20] text-[#d6d6d6]"
          >
            <svg viewBox="0 0 5 8" className="w-[5px] h-2" fill="none" stroke="currentColor">
              <path d="M4 1L1.500 4 4 7" />
            </svg>
          </button>
        </div>
        <section className="flex-1 min-w-0 flex flex-col">
          <div className="flex-1 min-h-0 flex">
            <div className="relative flex-1 min-w-0 overflow-hidden">
              <Plot />
              <Legend />
              <PaneButtons />
              <div
                className="absolute size-[22px] -translate-x-1/2 -translate-y-1/2 flex items-center justify-center rounded-sm bg-[#3d3d3d] text-white"
                style={{ left: pctX(210), top: `${((264.5 - TOP) / HEIGHT) * 100}%` }}
              >
                <svg viewBox="0 0 18 18" className="size-[18px]" fill="none" stroke="currentColor">
                  <circle cx="9" cy="9" r="7.500" />
                  <path d="M9 5v8M5 9h8" />
                </svg>
              </div>
              <svg viewBox="0 0 36 36" className="absolute left-3 bottom-[13px] size-9">
                <circle cx="18" cy="18" r="17.500" fill="#0f0f0f" stroke="#3d3d3d" />
                <path d="M7 12h9v12h-5v-7H7zM25 12h5.500l-5 12H20z" fill="#fff" />
                <circle cx="19.500" cy="14.500" r="2.500" fill="#fff" />
              </svg>
              <div className="absolute left-1 bottom-[37px] h-[26px] px-[6px] flex items-center gap-[10px] whitespace-nowrap bg-[#181a20]/50 text-sm text-[#707a8a]">
                <span>MACD 12 26 close 9 EMA EMA</span>
                <span className="text-[#fccbcd]">-10.29057</span>
                <span className="text-[#2259ef]">-104.58935</span>
                <span className="text-[#fbb40a]">-94.29878</span>
              </div>
            </div>
            <PriceAxis />
          </div>
          <TimeAxis />
          <div className="h-1 shrink-0 bg-[#0e0f12]" />
        </section>
      </main>
    </div>
  );
};

export default App;
